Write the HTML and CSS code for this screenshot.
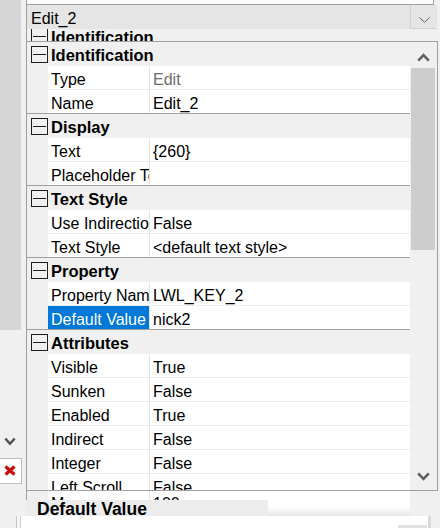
FILE: index.html
```html
<!DOCTYPE html>
<html>
<head>
<meta charset="utf-8">
<title>Properties</title>
<link rel="stylesheet" href="styles.css">
</head>
<body>
<div class="top">
  <div class="left">
    <div class="left-upper"><div class="left-gray"></div><div class="left-light"></div></div>
    <div class="left-lower">
      <svg class="chev-left" width="12" height="9" viewBox="0 0 12 9"><polyline points="1.3,1.5 6,6.8 10.7,1.5"/></svg>
      <div class="xbox">
        <svg class="xmark" width="12" height="11" viewBox="0 0 12 11"><line x1="1.5" y1="1.5" x2="10.5" y2="9.5"/><line x1="10.5" y1="1.5" x2="1.5" y2="9.5"/></svg>
      </div>
    </div>
  </div>
  <div class="main">
    <div class="stack">
      <div class="topbox"></div>
      <div class="combo">
        <div class="combo-text">Edit_2</div>
        <div class="combo-btn"><svg width="11" height="6" viewBox="0 0 11 6"><polyline points="0.5,0.5 5.5,5.3 10.5,0.5"/></svg></div>
      </div>
      <div class="ghost">
        <div class="hdr"><div class="gut"><div class="tog"><div class="tog-line"></div></div></div><div class="ttl">Identification</div></div>
      </div>
      <div class="grid">
        <div class="rows">
          <div class="hdr"><div class="gut"><div class="tog"><div class="tog-line"></div></div></div><div class="ttl">Identification</div></div>
          <div class="row"><div class="gut"></div><div class="lbl">Type</div><div class="val ro">Edit</div></div>
          <div class="row end"><div class="gut"></div><div class="lbl">Name</div><div class="val">Edit_2</div></div>
          <div class="hdr"><div class="gut"><div class="tog"><div class="tog-line"></div></div></div><div class="ttl">Display</div></div>
          <div class="row"><div class="gut"></div><div class="lbl">Text</div><div class="val">{260}</div></div>
          <div class="row end"><div class="gut"></div><div class="lbl">Placeholder Text</div><div class="val"></div></div>
          <div class="hdr"><div class="gut"><div class="tog"><div class="tog-line"></div></div></div><div class="ttl">Text Style</div></div>
          <div class="row"><div class="gut"></div><div class="lbl">Use Indirection</div><div class="val">False</div></div>
          <div class="row end"><div class="gut"></div><div class="lbl">Text Style</div><div class="val">&lt;default text style&gt;</div></div>
          <div class="hdr"><div class="gut"><div class="tog"><div class="tog-line"></div></div></div><div class="ttl">Property</div></div>
          <div class="row"><div class="gut"></div><div class="lbl">Property Name</div><div class="val">LWL_KEY_2</div></div>
          <div class="row end"><div class="gut"></div><div class="lbl sel">Default Value</div><div class="val">nick2</div></div>
          <div class="hdr"><div class="gut"><div class="tog"><div class="tog-line"></div></div></div><div class="ttl">Attributes</div></div>
          <div class="row"><div class="gut"></div><div class="lbl">Visible</div><div class="val">True</div></div>
          <div class="row"><div class="gut"></div><div class="lbl">Sunken</div><div class="val">False</div></div>
          <div class="row"><div class="gut"></div><div class="lbl">Enabled</div><div class="val">True</div></div>
          <div class="row"><div class="gut"></div><div class="lbl">Indirect</div><div class="val">False</div></div>
          <div class="row"><div class="gut"></div><div class="lbl">Integer</div><div class="val">False</div></div>
          <div class="row"><div class="gut"></div><div class="lbl">Left Scroll</div><div class="val">False</div></div>
        </div>
        <div class="scroll">
          <div class="sb-up"><svg width="13" height="9" viewBox="0 0 13 9"><polyline points="1.2,7.6 6.5,2.2 11.8,7.6"/></svg></div>
          <div class="thumb"></div>
          <div class="sb-down"><svg width="13" height="9" viewBox="0 0 13 9"><polyline points="1.2,1.4 6.5,6.8 11.8,1.4"/></svg></div>
        </div>
      </div>
      <div class="ghost-row">
        <div class="row"><div class="gut"></div><div class="lbl">Max</div><div class="val">100</div></div>
      </div>
    </div>
    <div class="dv">
      <div class="dv-label">Default Value</div>
      <div class="dv-white"></div>
      <div class="dv-rest"></div>
    </div>
  </div>
</div>
<div class="bottom">
  <div class="b1"></div>
  <div class="bline"></div>
  <div class="b2"></div>
  <div class="popup"><div class="popup-btn"></div></div>
  <div class="pshadow"></div>
  <div class="b3"></div>
</div>
</body>
</html>
```

FILE: styles.css
```css
* { box-sizing: border-box; }
html, body { margin: 0; padding: 0; }
body {
  width: 440px;
  height: 528px;
  overflow: hidden;
  background: #f0f0f0;
  font-family: "Liberation Sans", Arial, sans-serif;
  font-size: 16px;
  color: #000;
}
.top { display: flex; height: 516px; }

/* left strip */
.left { width: 26px; flex: none; display: flex; flex-direction: column; }
.left-upper { height: 330px; display: flex; }
.left-gray { width: 21px; background: #d6d6d6; }
.left-light { flex: 1; background: #f0f0f0; }
.left-lower { flex: 1; display: flex; flex-direction: column; }
.chev-left { display: block; margin: 107px 0 0 4px; }
.chev-left polyline { fill: none; stroke: #505050; stroke-width: 2.4; }
.xbox {
  margin-top: 12px;
  width: 22px;
  height: 26px;
  background: #fff;
  border: 1px solid #bdbdbd;
  border-left: none;
}
.xmark { display: block; margin: 6px 0 0 4px; }
.xmark line { stroke: #c81010; stroke-width: 3.2; }

/* main column */
.main { flex: 1; min-width: 0; display: flex; flex-direction: column; }
.stack { border-left: 1px solid #a0a0a0; display: flex; flex-direction: column; }
.topbox {
  width: 407px;
  height: 5px;
  background: #fbfbfb;
  border-right: 1px solid #a0a0a0;
  border-bottom: 1px solid #a0a0a0;
}
.combo { display: flex; height: 24px; }
.combo-text {
  width: 383px;
  background: #e5e5e5;
  padding-left: 4px;
  line-height: 28px;
  overflow: hidden;
  white-space: nowrap;
}
.combo-btn {
  width: 27px;
  background: #e5e5e5;
  border-left: 1px solid #d0d0d0;
  border-bottom: 1px solid #d0d0d0;
  padding: 12px 0 0 8px;
}
.combo-btn svg { display: block; }
.combo-btn polyline { fill: none; stroke: #606060; stroke-width: 1; }

.ghost { width: 383px; height: 12px; overflow: hidden; background: #f0f0f0; }
.ghost .hdr { margin-top: -5px; }

/* property grid */
.grid {
  display: flex;
  width: 411px;
  height: 450px;
  border-top: 1px solid #a0a0a0;
  border-bottom: 1px solid #a0a0a0;
  border-right: 1px solid #a0a0a0;
}
.rows { width: 383px; height: 448px; overflow: hidden; background: #fff; flex: none; }

.hdr { display: flex; height: 24px; background: #f0f0f0; }
.hdr .gut { width: 21px; flex: none; padding: 4px 0 0 4px; }
.tog { width: 17px; height: 17px; border: 1px solid #1e1e1e; padding-top: 7px; }
.tog-line { height: 1px; margin: 0 1px; background: #1e1e1e; }
.ttl {
  flex: 1;
  padding-left: 3px;
  font-weight: bold;
  font-size: 16.5px;
  line-height: 27px;
  height: 24px;
  white-space: nowrap;
  overflow: hidden;
}

.row { display: flex; height: 24px; }
.row .gut { width: 21px; flex: none; background: #f0f0f0; }
.lbl {
  width: 102px;
  flex: none;
  border-right: 1px solid #e3e3e3;
  border-bottom: 1px solid #ececec;
  padding-left: 3px;
  line-height: 27px;
  white-space: nowrap;
  overflow: hidden;
}
.val {
  flex: 1;
  border-bottom: 1px solid #ececec;
  padding-left: 3px;
  line-height: 27px;
  white-space: nowrap;
  overflow: hidden;
}
.row.end { border-bottom: 1px solid #a0a0a0; }
.row.end .lbl, .row.end .val { border-bottom: none; }
.sel { background: #0078d7; color: #fff; }
.ro { color: #6d6d6d; }

/* scrollbar */
.scroll { width: 27px; flex: none; background: #f0f0f0; display: flex; flex-direction: column; }
.scroll svg { display: block; }
.scroll polyline { fill: none; stroke: #606060; stroke-width: 2.6; }
.sb-up { height: 26px; padding: 11px 0 0 7px; }
.thumb { height: 182px; margin: 0 2px 0 1px; background: #cdcdcd; }
.sb-down { margin-top: auto; padding: 0 0 9px 7px; }

.ghost-row { width: 383px; height: 9px; overflow: hidden; background: #fff; }
.ghost-row .row { margin-top: -1px; }

/* default value description panel */
.dv { display: flex; height: 16px; }
.dv-label {
  width: 242px;
  background: #ececec;
  padding-left: 11px;
  font-weight: bold;
  font-size: 17.5px;
  line-height: 18px;
  white-space: nowrap;
}
.dv-white { width: 142px; background: linear-gradient(#fff 0, #fff 7px, #e6e6e6 16px); }
.dv-rest { flex: 1; background: #f0f0f0; }

/* bottom popup */
.bottom { display: flex; height: 12px; }
.b1 { width: 16px; background: #f0f0f0; }
.bline { width: 1px; background: #c6c6c6; }
.b2 { width: 3px; background: #f6f6f6; }
.popup {
  width: 408px;
  background: #fff;
  border-left: 1px solid #cfcfcf;
  display: flex;
  justify-content: flex-end;
}
.popup-btn { width: 29px; height: 3px; margin: 9px 1px 0 0; background: #e1e1e1; }
.pshadow { width: 3px; background: #dadada; }
.b3 { flex: 1; }
```
